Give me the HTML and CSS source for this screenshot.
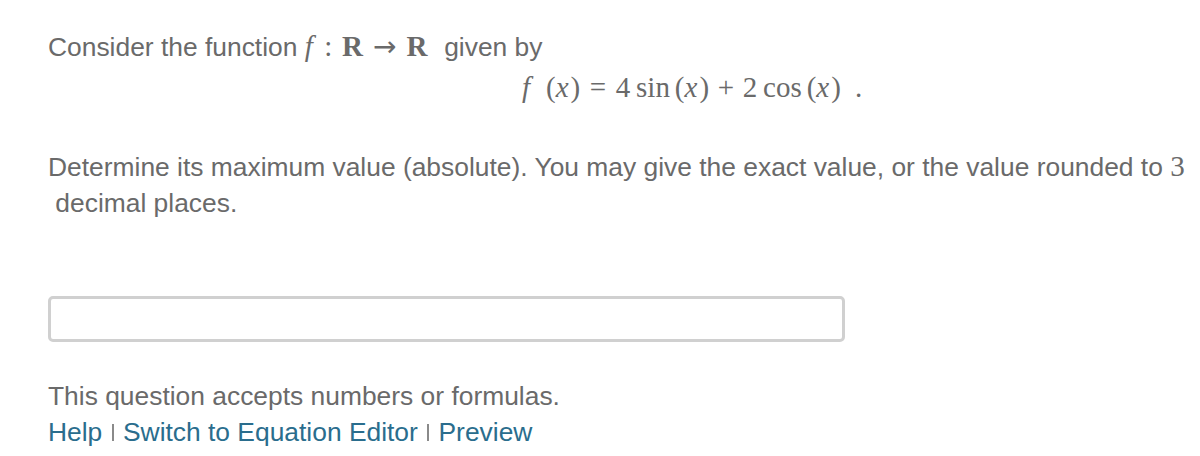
FILE: index.html
```html
<!DOCTYPE html>
<html>
<head>
<meta charset="utf-8">
<link rel="stylesheet" href="styles.css">
</head>
<body>
<div class="question">
  <p class="line intro">Consider the function <span class="math inline-math"><i>f</i><span class="rel">:</span><b>R</b><span class="rel arrow">→</span><b>R</b></span>&nbsp; given by</p>
  <div class="display"><span class="math"><i>f</i><span class="gap"></span>(<i>x</i>)<span class="rel">=</span>4<span class="fn">sin</span>(<i>x</i>)<span class="bin">+</span>2<span class="fn">cos</span>(<i>x</i>)<span class="gap2"></span>.</span></div>
  <p class="line task">Determine its maximum value (absolute). You may give the exact value, or the value rounded to <span class="math">3</span><br>&nbsp;decimal places.</p>
  <div class="answer"><input class="answer-input" type="text"></div>
  <p class="line note">This question accepts numbers or formulas.</p>
  <p class="line links"><a href="#">Help</a> <span class="sep"></span> <a href="#">Switch to Equation Editor</a> <span class="sep"></span> <a href="#">Preview</a></p>
</div>
</body>
</html>
```
FILE: styles.css
```css
html, body {
  margin: 0;
  padding: 0;
  background: #fff;
  overflow: hidden;
}
.question {
  padding: 28px 0 0 48px;
  font-family: "Liberation Sans", Arial, sans-serif;
  font-size: 26.4px;
  line-height: 36px;
  color: #6a6a6a;
  white-space: nowrap;
}
.line {
  margin: 0;
}
.math {
  font-family: "Liberation Serif", "DejaVu Serif", serif;
  font-size: 29px;
  color: #6a6a6a;
}
.inline-math {
  margin-right: 2px;
}
.math b {
  font-weight: bold;
}
.math i {
  padding-right: 2px;
}
.rel {
  margin: 0 0.33em;
}
.bin {
  margin: 0 0.3em;
}
.arrow {
  font-family: "DejaVu Sans", sans-serif;
  font-size: 28px;
  margin: 0 0.36em;
}
.fn {
  margin: 0 0.17em 0 0.2em;
}
.gap {
  display: inline-block;
  width: 14px;
}
.gap2 {
  display: inline-block;
  width: 14px;
}
.display {
  padding-left: 474px;
  margin-top: 4px;
  height: 36px;
}
.task {
  margin-top: 43px;
}
.answer {
  margin-top: 75px;
}
.answer-input {
  display: block;
  box-sizing: border-box;
  width: 797px;
  height: 46px;
  margin: 0;
  border: 3px solid #d0d0d0;
  border-radius: 5px;
  background: #fff;
  outline: none;
}
.note {
  margin-top: 36px;
}
.links a {
  color: #2a6d8d;
  text-decoration: none;
}
.sep {
  display: inline-block;
  width: 2px;
  height: 17px;
  margin: 0 2px;
  background: #8a8a8a;
}
```
